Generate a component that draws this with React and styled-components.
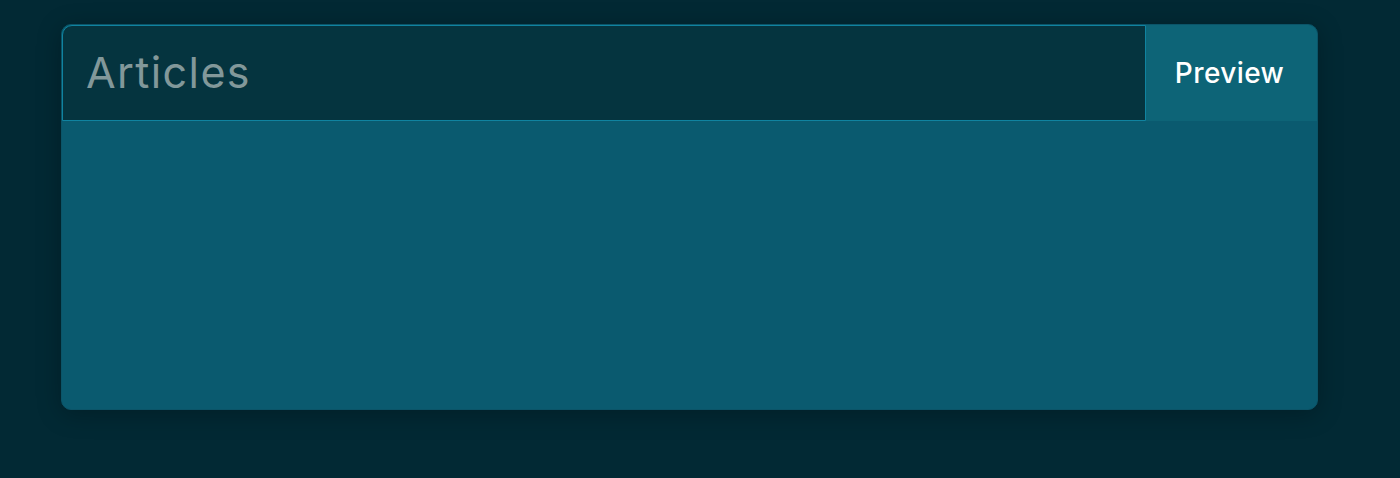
import React from "react";
import styled, { createGlobalStyle } from "styled-components";

const GlobalStyle = createGlobalStyle`
  html, body {
    margin: 0;
    padding: 0;
    background-color: #022934;
    font-family: "Inter", "Noto Sans", sans-serif;
  }
`;

const Page = styled.div`
  min-height: 478px;
  padding: 24px 82px 0 61px;
  box-sizing: border-box;
`;

const Card = styled.div`
  display: flex;
  flex-direction: column;
  height: 386px;
  background-color: #0a5a6f;
  border: 1px solid #0b5468;
  border-radius: 10px;
  overflow: hidden;
  box-shadow: 0 4px 24px rgba(0, 0, 0, 0.25);
  box-sizing: border-box;
`;

const Header = styled.div`
  display: flex;
  height: 96px;
  background-color: #0d6477;
`;

const TitleInput = styled.input`
  flex: 1;
  min-width: 0;
  margin: 0;
  padding: 0 23px 2px;
  border: 1px solid #1083a0;
  border-top-left-radius: 10px;
  background-color: #05343f;
  color: #d7e4e6;
  font-family: "Inter", "Noto Sans", sans-serif;
  font-size: 43px;
  font-weight: 400;
  letter-spacing: 1.4px;
  outline: none;

  &::placeholder {
    color: #82989a;
  }
`;

const PreviewButton = styled.button`
  width: 171px;
  padding: 0 4px 0 0;
  border: none;
  background: transparent;
  color: #ffffff;
  font-family: "Inter", "Noto Sans", sans-serif;
  font-size: 28px;
  font-weight: 500;
  letter-spacing: 0.4px;
  cursor: pointer;
`;

const Body = styled.div`
  flex: 1;
`;

function App() {
  return (
    <>
      <GlobalStyle />
      <Page>
        <Card>
          <Header>
            <TitleInput placeholder="Articles" />
            <PreviewButton>Preview</PreviewButton>
          </Header>
          <Body />
        </Card>
      </Page>
    </>
  );
}

export default App;
